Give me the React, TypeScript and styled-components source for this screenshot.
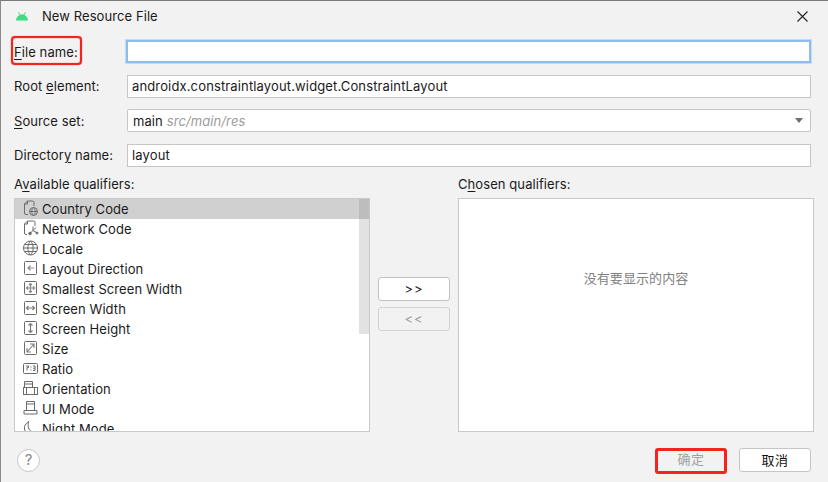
import React from "react";
import styled, { createGlobalStyle } from "styled-components";

const Global = createGlobalStyle`
  html, body { margin: 0; padding: 0; background: #f2f2f2; }
  * { box-sizing: border-box; }
`;

const Dialog = styled.div`
  width: 828px; height: 482px; overflow: hidden;
  background: #f2f2f2;
  border-top: 1px solid #7a7a7a;
  border-left: 1px solid #8a8a8a;
  display: flex; flex-direction: column;
  font: 13px/16px Inter, "Noto Sans CJK SC", sans-serif;
  letter-spacing: 0.08px;
  color: #1a1a1a;
`;
const TitleBar = styled.header`
  height: 30px; display: flex; align-items: center;
  padding: 0 20px 0 15px; gap: 14px;
`;
const Title = styled.div`flex: 1;`;
const Form = styled.div`
  display: grid; grid-template-columns: 113px 684px;
  grid-auto-rows: 23px; row-gap: 11.5px; align-items: center;
  padding: 9px 0 0 13px;
`;
const Label = styled.label`
  position: relative; display: block;
  u { text-underline-offset: 2px; }
`;
const RedMark = styled.span`
  position: absolute; left: -3px; top: -8px; width: 71px; height: 29px;
  border: 2px solid #f5231c; border-radius: 4px; pointer-events: none;
  box-shadow: 0 0 1px #f5231c, inset 0 0 1px #f5231c;
`;
const Field = styled.div<{ $focus?: boolean }>`
  height: 23px; background: #fff; display: flex; align-items: center;
  padding: 0 4px; white-space: nowrap; letter-spacing: 0.14px;
  margin-left: ${p => (p.$focus ? "-1px" : "0")};
  border: ${p => (p.$focus ? "2px solid #8dbcf0" : "1px solid #c6c6c6")};
  box-shadow: ${p => (p.$focus ? "0 0 0 1px #c4dcf7" : "none")};
`;
const Select = styled(Field)`
  border-radius: 2px; padding: 0 7px 0 5px; justify-content: space-between;
  letter-spacing: 0.08px;
  em { color: #9b9b9b; margin-left: 4px; }
`;
const Caret = styled.span`
  width: 0; height: 0;
  border-left: 4.5px solid transparent; border-right: 4.5px solid transparent;
  border-top: 5px solid #6e6e6e;
`;
const Lists = styled.div`
  display: grid; grid-template-columns: 356px 88px 356px;
  padding: 9px 0 0 13px;
`;
const Caption = styled.div`height: 22px; line-height: 16px;
  u { text-underline-offset: 2px; }
`;
const Column = styled.div`display: flex; flex-direction: column;`;
const ListBox = styled.div`
  position: relative; height: 234px; overflow: hidden; background: #fff;
  border: 1px solid #c9c9c9;
`;
const Row = styled.div<{ $sel?: boolean }>`
  height: 20px; display: flex; align-items: center; gap: 3px; padding-left: 7px;
  background: ${p => (p.$sel ? "#d0d0d0" : "transparent")};
  white-space: nowrap;
  svg { flex: none; }
`;
const Track = styled.div`
  position: absolute; top: 0; right: 0; width: 10px; height: 135px; background: #e2e2e2;
`;
const Thumb = styled.div`height: 20px; background: #bdbdbd;`;
const Middle = styled.div`
  display: flex; flex-direction: column; gap: 6px; padding: 101px 0 0 8px;
`;
const SmallButton = styled.button<{ $off?: boolean }>`
  width: 72px; height: 24px; padding: 0; border-radius: 3px;
  font: 13px/16px Inter, sans-serif; letter-spacing: 1px;
  background: ${p => (p.$off ? "#f2f2f2" : "#fff")};
  color: ${p => (p.$off ? "#9a9a9a" : "#1a1a1a")};
  border: 1px solid ${p => (p.$off ? "#d2d2d2" : "#c2c2c2")};
`;
const Chosen = styled.div`
  height: 234px; background: #fff; border: 1px solid #c9c9c9;
  display: flex; align-items: center; justify-content: center;
  color: #808080; padding-bottom: 74px;
`;
const Footer = styled.footer`
  display: flex; align-items: flex-start; padding: 16px 17px 0 16px;
`;
const Help = styled.div`
  width: 23px; height: 23px; border-radius: 50%; background: #fff;
  border: 1px solid #c6c6c6; color: #8a8a8a; margin-top: 1px;
  display: flex; align-items: center; justify-content: center;
  font-size: 15px; margin-right: auto;
`;
const Ok = styled.button`
  width: 72px; height: 26px; padding: 0 0 3px; border: 3px solid #f5231c; border-radius: 3px;
  background: #f2f2f2; color: #a0a0a0; margin-right: 12px;
  font: 13px/16px "Noto Sans CJK SC", sans-serif; letter-spacing: 0.5px;
`;
const Cancel = styled.button`
  width: 72px; height: 24px; padding: 0; border: 1px solid #c6c6c6; border-radius: 3px;
  background: #fff; color: #111;
  font: 13px/16px "Noto Sans CJK SC", sans-serif; letter-spacing: 0.5px;
`;

const Ic: React.FC<{ children: React.ReactNode }> = ({ children }) => (
  <svg width="17" height="17" viewBox="0 1 17 17" fill="none" stroke="#6b6b6b" strokeWidth="1">
    {children}
  </svg>
);
const Box = <rect x="2.500" y="2.500" width="12" height="13" rx="1" />;
const icons: Record<string, React.ReactNode> = {
  country: <><path d="M6 15.500H4a1.500 1.500 0 0 1-1.500-1.500V5l3-3h5a1.500 1.500 0 0 1 1.500 1.500V7M5.500 2v3h-3" /><circle cx="11.500" cy="12.500" r="4" /><path d="M7.500 12.500h8M11.500 8.500c-2.400 2.400-2.400 5.600 0 8M11.500 8.500c2.400 2.400 2.400 5.600 0 8" /></>,
  network: <><path d="M5 15.500H4a1.500 1.500 0 0 1-1.500-1.500V5l3-3h6a1.500 1.500 0 0 1 1.500 1.500V7M5.500 2v3h-3" /><path d="M8 14.500l3-3 4 2.500M11 11.500V7.500M11 11.500l3-3" /><circle cx="8" cy="14.500" r="1.300" fill="#6b6b6b" /><circle cx="15" cy="14" r="1" fill="#6b6b6b" /></>,
  locale: <><circle cx="8.500" cy="9" r="7" /><path d="M1.500 9h14M2.500 5.500h12M2.500 12.500h12M8.500 2c-3.600 4-3.600 10 0 14M8.500 2c3.600 4 3.600 10 0 14" /></>,
  layout: <>{Box}<path d="M12 9H6M8.500 6.500L6 9l2.500 2.500" stroke="#8a8a8a" strokeWidth="1.200" /></>,
  smallest: <>{Box}<path d="M8.500 4.500v9M4.500 9h8M7 6l1.500-1.500L10 6M7 12l1.500 1.500L10 12M6 7.500L4.500 9 6 10.500M11 7.500L12.500 9 11 10.500" stroke="#8a8a8a" strokeWidth="1.200" /></>,
  width: <>{Box}<path d="M4.500 9h8M6.500 7L4.500 9l2 2M10.500 7l2 2-2 2" stroke="#7d7d7d" strokeWidth="1.200" /></>,
  height: <>{Box}<path d="M8.500 4.500v9M6.500 6.500l2-2 2 2M6.500 11.500l2 2 2-2" stroke="#7d7d7d" strokeWidth="1.200" /></>,
  size: <>{Box}<path d="M5 13l7-8M8 5h4v4M5 9v4h4" stroke="#7d7d7d" strokeWidth="1.100" /></>,
  ratio: <><rect x="1.500" y="4.500" width="14" height="10" rx="1" /><path d="M4 7h2.500v1.500H5v3M11 7h2M13 7v4.500M11 9.200h2M11 11.500h2M9 7.500v1M9 10.500v1" stroke="#6b6b6b" /></>,
  orientation: <><path d="M2.500 8.500v-6h8v6M2.500 5h8" /><rect x="1.500" y="8.500" width="14" height="7" /><path d="M4.500 8.500v7M12.500 8.500v7" /></>,
  ui: <><path d="M4.500 11.500v-9h8v9M4.500 5h8" /><path d="M2 11.500h13v3.500H2z" /></>,
  night: <><path d="M6.500 3C3.500 4.500 2 7 2.500 10c.5 3 3 5.500 6 5.500 2.500 0 4.500-1 5.500-3-3.500 1-6.500-.5-7.500-3.500-.5-2-.5-4.500 0-6.500z" /></>,
};
const qualifiers: [string, string][] = [
  ["Country Code", "country"], ["Network Code", "network"], ["Locale", "locale"],
  ["Layout Direction", "layout"], ["Smallest Screen Width", "smallest"], ["Screen Width", "width"],
  ["Screen Height", "height"], ["Size", "size"], ["Ratio", "ratio"],
  ["Orientation", "orientation"], ["UI Mode", "ui"], ["Night Mode", "night"],
];

export default function App() {
  return (
    <>
      <Global />
      <Dialog>
        <TitleBar>
          <svg width="12" height="9" viewBox="0 0 12 9" fill="#3ddc84">
            <path d="M0 8.500C.3 5 2.800 2.500 6 2.500S11.700 5 12 8.500z" />
            <path d="M2.500 .3l1.800 3M9.500 .3l-1.800 3" stroke="#3ddc84" strokeWidth="1" />
          </svg>
          <Title>New Resource File</Title>
          <svg width="11" height="11" viewBox="0 0 11 11" stroke="#222" strokeWidth="1.100">
            <path d="M.5 .5l10 10M10.500 .5l-10 10" />
          </svg>
        </TitleBar>
        <Form>
          <Label><u>F</u>ile name:<RedMark /></Label>
          <Field $focus />
          <Label>Root <u>e</u>lement:</Label>
          <Field>androidx.constraintlayout.widget.ConstraintLayout</Field>
          <Label><u>S</u>ource set:</Label>
          <Select><span>main<em>src/main/res</em></span><Caret /></Select>
          <Label>Director<u>y</u> name:</Label>
          <Field>layout</Field>
        </Form>
        <Lists>
          <Column>
            <Caption>A<u>v</u>ailable qualifiers:</Caption>
            <ListBox>
              {qualifiers.map(([name, icon], i) => (
                <Row key={name} $sel={i === 0}><Ic>{icons[icon]}</Ic>{name}</Row>
              ))}
              <Track><Thumb /></Track>
            </ListBox>
          </Column>
          <Middle>
            <SmallButton>&gt;&gt;</SmallButton>
            <SmallButton $off>&lt;&lt;</SmallButton>
          </Middle>
          <Column>
            <Caption>C<u>h</u>osen qualifiers:</Caption>
            <Chosen>没有要显示的内容</Chosen>
          </Column>
        </Lists>
        <Footer>
          <Help>?</Help>
          <Ok>确定</Ok>
          <Cancel>取消</Cancel>
        </Footer>
      </Dialog>
    </>
  );
}
